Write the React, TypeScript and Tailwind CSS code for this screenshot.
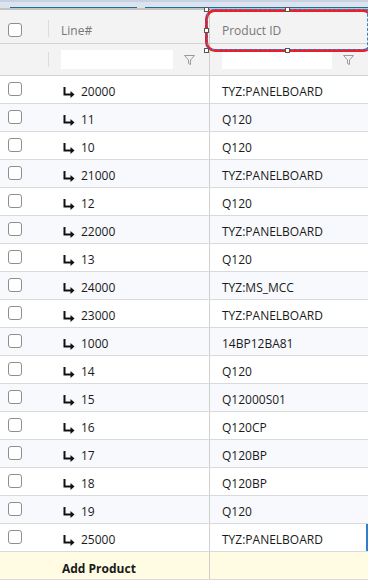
import React from "react";

const ROWS: [string, string][] = [
  ["20000", "TYZ:PANELBOARD"],
  ["11", "Q120"],
  ["10", "Q120"],
  ["21000", "TYZ:PANELBOARD"],
  ["12", "Q120"],
  ["22000", "TYZ:PANELBOARD"],
  ["13", "Q120"],
  ["24000", "TYZ:MS_MCC"],
  ["23000", "TYZ:PANELBOARD"],
  ["1000", "14BP12BA81"],
  ["14", "Q120"],
  ["15", "Q12000S01"],
  ["16", "Q120CP"],
  ["17", "Q120BP"],
  ["18", "Q120BP"],
  ["19", "Q120"],
  ["25000", "TYZ:PANELBOARD"],
];

function Checkbox() {
  return <div className="w-[14px] h-[14px] rounded-[3px] border border-[#8e8e8e] bg-white" />;
}

function FilterIcon() {
  return (
    <svg width="11" height="10" viewBox="0 0 11 10" className="shrink-0">
      <path d="M0.5 0.5 H10.5 L6.5 5 V9.5 L4.5 8.5 V5 Z" fill="none" stroke="#9a9a9a" strokeWidth="1" />
    </svg>
  );
}

// child-row arrow (↳)
function ChildArrow() {
  return (
    <svg width="12" height="11" viewBox="0 0 12 11" className="shrink-0 mr-[6px]">
      <path d="M1.5 0 V7.5 H9" fill="none" stroke="#111" strokeWidth="2" />
      <path d="M7.5 4 L11.5 7.5 L7.5 11 Z" fill="#111" />
    </svg>
  );
}

function Handle({ className }: { className: string }) {
  return <div className={`absolute w-[5px] h-[5px] bg-white border border-[#555] ${className}`} />;
}

export default function App() {
  return (
    <div className="relative w-[368px] h-[581px] overflow-hidden bg-white text-[12px] text-[#1a1a1a]" style={{ fontFamily: '"Open Sans", "Noto Sans", sans-serif' }}>
      {/* top strip */}
      <div className="h-[2px] bg-[#c6d1e3]" />
      <div className="h-[5px] bg-[#dde3ec]" />
      <div className="flex h-[1px] bg-[#dde3ec]">
        <div className="ml-[10px] w-[127px] bg-[#1d6f93]" />
        <div className="ml-[8px] flex-1 bg-[#1d6f93]" />
      </div>
      <div className="h-[2px] bg-[#c4c4c4]" />

      {/* header */}
      <div className="grid grid-cols-[49px_160px_1fr] h-[34px] bg-[#f3f3f3] border-b border-[#d2d2d2]">
        <div className="flex items-center pl-[8px] pt-[3px] border-r border-[#dcdcdc] my-[10px]">
          <Checkbox />
        </div>
        <div className="flex items-center pl-[12px] pt-[5px] text-[#777]">Line#</div>
        <div className="flex items-center pl-[12px] pt-[5px] border-l border-[#cfcfcf] text-[#777]">Product ID</div>
      </div>

      {/* filter row */}
      <div className="grid grid-cols-[49px_160px_1fr] h-[32px] bg-[#f3f3f3] border-b border-[#d2d2d2]">
        <div className="border-r border-[#dcdcdc] my-[8px]" />
        <div className="flex items-center pl-[12px] pr-[13px] gap-[11px]">
          <div className="w-[112px] h-[19px] bg-white" />
          <FilterIcon />
        </div>
        <div className="flex items-center pl-[12px] pr-[15px] gap-[11px] border-l border-[#cfcfcf]">
          <div className="w-[110px] h-[19px] bg-white" />
          <FilterIcon />
        </div>
      </div>

      {/* rows */}
      {ROWS.map(([line, product], i) => (
        <div
          key={i}
          className={`grid grid-cols-[49px_160px_1fr] h-[28px] border-b border-[#dadada] ${i % 2 === 1 ? "bg-[#f8f9fc]" : "bg-white"}`}
        >
          <div className="flex items-center pl-[8px] pb-[2px]">
            <Checkbox />
          </div>
          <div className="flex items-center pl-[14px] pt-[5px]">
            <ChildArrow />
            <span>{line}</span>
          </div>
          <div className={`flex items-center pl-[12px] pt-[5px] border-l border-[#cfcfcf] ${i === ROWS.length - 1 ? "border-r-2 border-r-[#2f7fd0]" : ""}`}>
            {product}
          </div>
        </div>
      ))}

      {/* add product */}
      <div className="grid grid-cols-[49px_160px_1fr] h-[28px] bg-[#fffce3] border-b border-[#dadada]">
        <div />
        <div className="flex items-center pl-[13px] pt-[6px] font-bold">Add Product</div>
        <div className="border-l border-[#cfcfcf]" />
      </div>

      {/* selection annotation over Product ID header */}
      <div className="absolute left-[205px] top-[9px] w-[168px] h-[43px] rounded-[10px] border-[3px] border-[#e8202a]" />
      <div className="absolute left-[207px] top-[9px] w-[161px] h-[41px] border border-dashed border-[#3b7fd6]" />
      <Handle className="left-[204px] top-[7px]" />
      <Handle className="left-[285px] top-[7px]" />
      <Handle className="left-[204px] top-[28px]" />
      <Handle className="left-[204px] top-[48px]" />
      <Handle className="left-[285px] top-[48px]" />
    </div>
  );
}
